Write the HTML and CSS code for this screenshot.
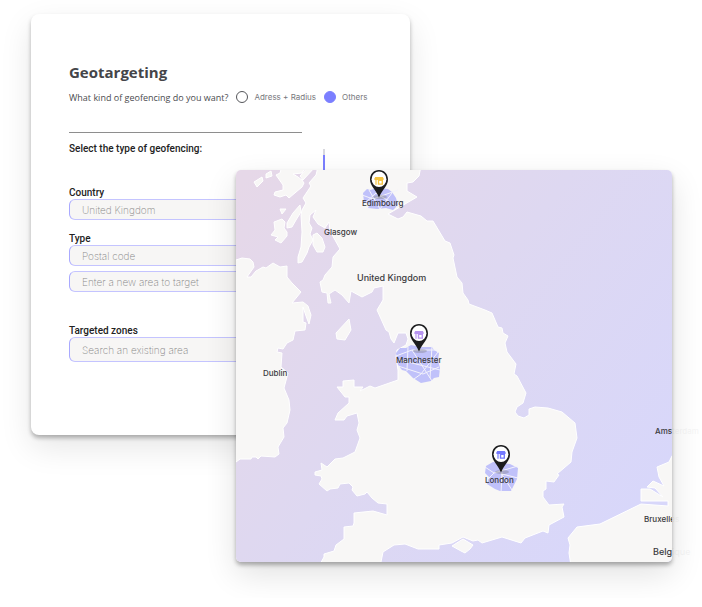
FILE: index.html
```html
<!DOCTYPE html>
<html lang="en">
<head>
<meta charset="utf-8">
<meta name="viewport" content="width=device-width, initial-scale=1">
<title>Geotargeting</title>
<link rel="stylesheet" href="styles.css">
</head>
<body>
<main class="stage">
  <form class="card">
    <h1 class="title">Geotargeting</h1>
    <div class="kinds" role="radiogroup" aria-labelledby="kind-question">
      <span class="question" id="kind-question">What kind of geofencing do you want?</span>
      <label class="kind"><input type="radio" name="kind" value="radius">Adress + Radius</label>
      <label class="kind"><input type="radio" name="kind" value="others" checked>Others</label>
    </div>
    <div class="divider"></div>
    <div class="select-row">
      <h2 class="subtitle">Select the type of geofencing:</h2>
      <span class="scroll-track"></span>
    </div>
    <div class="group">
      <label class="label" for="country">Country</label>
      <input class="field" id="country" type="text" placeholder="United Kingdom">
    </div>
    <div class="group">
      <label class="label" for="type">Type</label>
      <input class="field" id="type" type="text" placeholder="Postal code">
      <input class="field" type="text" aria-label="New area" placeholder="Enter a new area to target">
    </div>
    <div class="group group-zones">
      <label class="label" for="zones">Targeted zones</label>
      <input class="field field-tall" id="zones" type="text" placeholder="Search an existing area">
    </div>
  </form>

  <section class="map" aria-label="Map">
    <svg class="map-svg" viewBox="236 170 436 392">
      <defs>
        <linearGradient id="sea" gradientUnits="userSpaceOnUse" x1="236" y1="190" x2="640" y2="500">
          <stop offset="0" stop-color="#e6d8e8"/>
          <stop offset="0.5" stop-color="#ded8f1"/>
          <stop offset="1" stop-color="#d8d7fa"/>
        </linearGradient>
        <linearGradient id="ink" gradientUnits="userSpaceOnUse" x1="236" y1="0" x2="700" y2="0">
          <stop offset="0.94" stop-color="#38383b"/>
          <stop offset="0.94" stop-color="#38383b" stop-opacity="0.05"/>
        </linearGradient>
        <clipPath id="frame"><rect x="236" y="170" width="436" height="392" rx="5"/></clipPath>
        <g id="pin">
          <ellipse class="pin-shade" cx="1" cy="17" rx="7" ry="2"/>
          <path class="pin-body" d="M0 -10C-5.300 -10 -9 -6 -9 -0.500C-9 6 -3.500 9 0 17.500C3.500 9 9 6 9 -0.500C9 -6 5.300 -10 0 -10Z"/>
          <ellipse class="pin-face" cx="0" cy="-0.700" rx="7.400" ry="7.700"/>
        </g>
        <g id="shop">
          <path d="M-3.800 -4H3.800L4.600 -2.400V-1H-4.600V-2.400Z"/>
          <path d="M-3.600 -1H-2.400V3.800H-3.600ZM-1.200 -1H4V3.800H-1.200ZM0.200 0V2.600H2.600V0Z" fill-rule="evenodd"/>
        </g>
      </defs>
      <g clip-path="url(#frame)">
        <rect x="236" y="170" width="436" height="392" fill="url(#sea)"/>
        <g class="land">
          <path d="M317 166V171L316 175L309 183L311 186L307 192L303 198L306 203L302 210L301 215L302 232L301 247L298 257L298 263L302 262L307 253L309 247L313 240L310 234L312 228L309 223L310 215L316 210L313 217L318 224L325 228L329 222L330 231L335 240L340 249L333 257L332 267L325 275L323 280L320 282L322 292L327 293L328 303L331 303L329 294L335 290L342 295L349 303L351 291L362 297L372 292L374 288L383 286L383 300L377 310L386 330L389 332L391 339L394 343L398 333L406 333L408 339L406 345L397 350L396 357L398 370L398 380L375 388L370 386L360 391L363 387L354 387L354 380L343 381L343 387H337L345 397H349V403L338 413L335 420H344L347 416L357 413L359 423L357 430L360 438L355 452L343 458L335 459L327 467L321 463L322 470L315 472V475L321 476L322 479L319 484L327 491L330 489L338 488L340 484L349 483L353 487L352 490L357 496L365 494L367 492L372 498L378 503L387 504V515L373 511L354 513V523L353 526L344 527V539L336 545L334 551L324 554V557L319 566H380L381 562L383 552L394 545L405 544L418 549H439V545L452 543L463 537L473 541L478 540L482 543L502 537L521 543L525 538L543 531L548 533L549 525L564 517L562 507L564 504L549 505L543 497V491L546 489V481L554 482L559 475L557 474L571 462L572 452L577 438L575 423L562 412L548 408L535 407L529 409V415L524 418L518 416L515 412L517 407L523 403L526 393L517 376L514 374L516 364L507 352L505 343L508 336L503 333L502 328L498 327L492 313L485 310L469 304L468 300L463 293L462 283L457 277L453 258L454 255L450 243L445 241L433 221H427L421 216L407 212L403 217L398 219L388 214L417 197L407 191V183L413 182L419 176L421 166Z"/>
          <path d="M230 262L236 260L242 258L250 259L253 262L254 267L247 277H251L256 271L263 267L266 268L273 263L280 267L287 266V277L292 283L301 292L292 303L303 302L308 306L311 315L309 324L306 316L303 307V322L306 323L305 330L295 331L293 340L287 343L283 349L278 348L277 352L282 353L281 367L288 373L284 388L289 400L290 410L287 423L283 428L284 437L278 447L279 454L275 457L261 456L258 459L256 457H252L251 459H240L236 462H230Z"/>
          <path d="M282 166L280 173L276 175L283 185V190L275 192L274 195L280 197L286 195L289 198L302 187L304 183L302 180L298 177L293 174L302 173L306 166Z"/>
          <path d="M309 166H316L303 180L300 176Z"/>
          <path d="M313 235L317 233L322 238L325 247L323 252H317L313 245Z"/>
          <path d="M300 205L293 213L287 223V228L292 227L296 220L301 212Z"/>
          <path d="M274 222L282 219L285 222L284 228L287 232V236L281 243L275 240L278 237L271 235L275 230Z"/>
          <path d="M280 209H286L282 214Z"/>
          <path d="M254 182L262 177L263 181L257 187Z"/>
          <path d="M266 174L271 171L272 176L266 178Z"/>
          <path d="M349 319L351 330L345 340L337 339L336 333Z"/>
          <path d="M452 546L463 539L473 545L470 549L465 553L461 551Z"/>
          <path d="M676 450L672 456L669 462L657 467L659 477L664 486L653 481L647 487L655 488L663 497L650 489H641V501H668V506L641 504L600 524L577 527L568 538L570 545L569 553L571 566H676Z"/>
        </g>
        <g class="zones">
          <path d="M363 193L367 189L370 190L377 188L388 189L392 192L396 198L398 205L393 210L386 208L377 209L368 208L370 204L364 202Z"/>
          <path d="M396 353L400 348L406 348L411 345L420 347L432 347L434 350L439 353L438 360L440 368L439 377L434 378L431 381L421 383L413 378L406 371L402 370L398 365Z"/>
          <path d="M486 466L493 462L510 464L518 468L517 479L513 487L511 491L500 491L495 489L487 484L489 477L485 473Z"/>
        </g>
        <g class="roads">
          <path d="M362 195L373 199L398 190M369 190L380 209L392 193M364 204L376 193L398 207"/>
          <path d="M396 356L412 350L438 350M408 347L407 371M412 350L432 381M398 366L423 374L439 367M432 346L430 378M396 359L440 370M438 352L421 374L414 379"/>
          <path d="M485 467L494 473L518 466M494 473L484 483M502 472L501 493M502 474L518 478M501 473L512 490"/>
        </g>
      </g>
      <g class="marks">
        <use href="#pin" x="379" y="180"/>
        <use href="#shop" x="379" y="181" fill="#f6c544"/>
        <use href="#pin" x="419" y="334"/>
        <use href="#shop" x="419" y="335" fill="#b795f0"/>
        <use href="#pin" x="501" y="455"/>
        <use href="#shop" x="501" y="455" fill="#7479ff"/>
      </g>
      <g class="names" fill="url(#ink)">
        <text x="362" y="206">Edimbourg</text>
        <text x="324" y="235">Glasgow</text>
        <text class="region" x="357" y="281">United Kingdom</text>
        <text x="396" y="363">Manchester</text>
        <text x="263" y="376">Dublin</text>
        <text x="485" y="483">London</text>
        <text x="655" y="434">Amsterdam</text>
        <text x="644" y="522">Bruxelles</text>
        <text class="region" x="653" y="555">Belgique</text>
      </g>
    </svg>
  </section>
</main>
</body>
</html>
```
FILE: styles.css
```css
* { box-sizing: border-box; }

body {
  margin: 0;
  background: #fff;
  color: #222;
  font-family: Inter, "Liberation Sans", sans-serif;
}

/* The map overlaps the lower right of the card through shared grid cells. */
.stage {
  display: grid;
  grid-template-columns: 205fr 174fr 262fr;
  grid-template-rows: 156px 265px auto;
  padding: 14px 30px 36px 31px;
}

.card {
  grid-area: 1 / 1 / 3 / 3;
  min-width: 0;
  padding: 48px 38px;
  border-radius: 8px;
  background: #fff;
  box-shadow: 0 3px 4px rgba(0, 0, 0, 0.28), 0 12px 32px rgba(0, 0, 0, 0.1);
}

.map {
  grid-area: 2 / 2 / 4 / 4;
  position: relative;
  align-self: start;
  border-radius: 5px;
  box-shadow: 0 3px 4px rgba(0, 0, 0, 0.3), 0 12px 32px rgba(0, 0, 0, 0.12);
}

.map-svg {
  display: block;
  width: 100%;
  height: auto;
  overflow: visible;
}

.title {
  margin: 0;
  color: #444549;
  font-family: "Open Sans", sans-serif;
  font-size: 15px;
  line-height: 20px;
  font-weight: 700;
}

.kinds {
  display: flex;
  align-items: center;
  gap: 8px;
  height: 14px;
  margin-top: 8px;
  white-space: nowrap;
}

.question {
  color: #4b4c50;
  font-family: "Open Sans", sans-serif;
  font-size: 9px;
  font-weight: 500;
}

.kind {
  display: flex;
  align-items: center;
  gap: 6px;
  color: #77787c;
  font-size: 8px;
}

.kind input {
  appearance: none;
  width: 12px;
  height: 12px;
  margin: 0;
  border: 1px solid #55565a;
  border-radius: 50%;
}

.kind input:checked {
  border-color: #7b7fff;
  background: #7b7fff;
}

.divider {
  width: 233px;
  max-width: 100%;
  height: 1px;
  margin-top: 28px;
  background: #8e8e8e;
}

.select-row {
  display: flex;
  align-items: flex-start;
  justify-content: space-between;
  padding: 9px 47px 0 0;
}

.subtitle {
  margin: 0;
  font: 500 10px/14px Roboto, sans-serif;
}

.scroll-track {
  width: 2px;
  height: 30px;
  margin-top: 7px;
  background: linear-gradient(#d8d8de 6px, #7b7fff 6px);
}

.group {
  display: flex;
  flex-direction: column;
  margin-top: 12px;
}

.select-row + .group { margin-top: 7px; }
.group-zones { margin-top: 32px; }

.label {
  font: 500 10px/13px Roboto, sans-serif;
}

.field {
  width: 100%;
  height: 21px;
  padding: 0 12px;
  border: 1px solid #c4c4ff;
  border-left-color: #a9a9ff;
  border-radius: 6px;
  background: #f7f6f5;
  font: 200 10px/14px Inter, sans-serif;
}

.field + .field { margin-top: 5px; }
.field-tall { height: 25px; }
.field::placeholder { color: #8a8a8a; opacity: 1; }

.land path {
  fill: #f8f7f6;
  stroke: #fff;
  stroke-width: 1;
  stroke-linejoin: round;
}

.zones { fill: #c0c1fa; }

.roads {
  fill: none;
  stroke: #f4f3fc;
  stroke-width: 1;
}

.pin-shade { fill: #777; opacity: 0.35; }
.pin-body { fill: #1c1c1e; }
.pin-face { fill: #fff; }

.names {
  font-family: Inter, sans-serif;
  font-size: 8px;
  font-weight: 500;
}

.names .region { font-size: 9px; }
```
